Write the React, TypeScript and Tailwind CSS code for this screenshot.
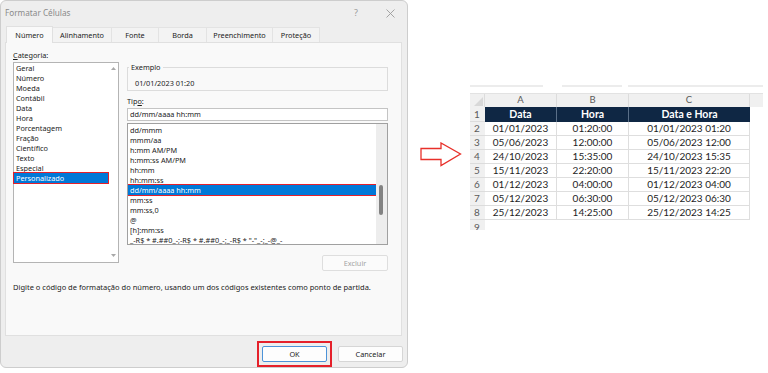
import React from "react";

const categories = [
  "Geral",
  "Número",
  "Moeda",
  "Contábil",
  "Data",
  "Hora",
  "Porcentagem",
  "Fração",
  "Científico",
  "Texto",
  "Especial",
  "Personalizado",
];

const types = [
  "dd/mmm",
  "mmm/aa",
  "h:mm AM/PM",
  "h:mm:ss AM/PM",
  "hh:mm",
  "hh:mm:ss",
  "dd/mm/aaaa hh:mm",
  "mm:ss",
  "mm:ss,0",
  "@",
  "[h]:mm:ss",
  '_-R$ * #.##0_-;-R$ * #.##0_-;_-R$ * "-"_-;_-@_-',
];

const tabs = [
  { label: "Número", w: "w-[47px]" },
  { label: "Alinhamento", w: "w-[59px]" },
  { label: "Fonte", w: "w-[47px]" },
  { label: "Borda", w: "w-[48px]" },
  { label: "Preenchimento", w: "w-[66px]" },
  { label: "Proteção", w: "w-[47px]" },
];

const rows = [
  ["01/01/2023", "01:20:00", "01/01/2023 01:20"],
  ["05/06/2023", "12:00:00", "05/06/2023 12:00"],
  ["24/10/2023", "15:35:00", "24/10/2023 15:35"],
  ["15/11/2023", "22:20:00", "15/11/2023 22:20"],
  ["01/12/2023", "04:00:00", "01/12/2023 04:00"],
  ["05/12/2023", "06:30:00", "05/12/2023 06:30"],
  ["25/12/2023", "14:25:00", "25/12/2023 14:25"],
];

function Dialog() {
  return (
    <div className="w-[408px] h-[368px] shrink-0 bg-[#eeeeee] border border-[#cdcdcd] rounded-[6px] flex flex-col text-[#1b1b1b] text-[7.3px] font-['Noto_Sans',sans-serif]">
      {/* title bar */}
      <div className="h-[24px] flex items-center pl-[4px] pr-[8px]">
        <span className="text-[8.2px] text-[#8a8a8a]">Formatar Células</span>
        <span className="ml-auto text-[9px] text-[#9a9a9a] mr-[28px]">?</span>
        <svg width="9" height="9" viewBox="0 0 9 9" className="mr-[4px]">
          <path d="M0.5 0.5 L8.5 8.5 M8.5 0.5 L0.5 8.5" stroke="#9a9a9a" strokeWidth="0.9" />
        </svg>
      </div>
      {/* tabs */}
      <div className="flex items-end h-[17px] pl-[5px]">
        {tabs.map((t, i) =>
          i === 0 ? (
            <div
              key={t.label}
              className={`${t.w} h-[17px] bg-[#f9f9f9] border border-b-0 border-[#e0e0e0] flex items-center justify-center relative z-10 -mb-[1px]`}
            >
              {t.label}
            </div>
          ) : (
            <div
              key={t.label}
              className={`${t.w} h-[15px] bg-[#f3f3f3] border border-b-0 border-l-0 border-[#e3e3e3] flex items-center justify-center`}
            >
              {t.label}
            </div>
          )
        )}
      </div>
      {/* panel */}
      <div className="ml-[4px] w-[397px] h-[294px] bg-[#f9f9f9] border border-[#e0e0e0] pl-[7px] pt-[6px] flex flex-col">
        <div className="flex">
          {/* left column */}
          <div className="w-[106px] flex flex-col">
            <div className="h-[13px] leading-[13px]">
              <span className="underline">C</span>ategoria:
            </div>
            <div className="h-[201px] bg-white border border-[#b4b4b4] flex">
              <div className="flex-1 flex flex-col">
                {categories.map((c, i) =>
                  i === categories.length - 1 ? (
                    <div
                      key={c}
                      className="h-[10px] leading-[10px] pl-[2px] bg-[#0078d7] text-white outline-[1.5px] outline-solid outline-[#e5202a]"
                    >
                      {c}
                    </div>
                  ) : (
                    <div key={c} className="h-[10px] leading-[10px] pl-[2px]">
                      {c}
                    </div>
                  )
                )}
              </div>
              <div className="w-[10px] flex flex-col items-center justify-between pt-[4px] pb-[5px]">
                <svg width="5" height="3" viewBox="0 0 5 3">
                  <path d="M0 3 L2.5 0 L5 3 Z" fill="#a8a8a8" />
                </svg>
                <svg width="5" height="3" viewBox="0 0 5 3">
                  <path d="M0 0 L2.5 3 L5 0 Z" fill="#a8a8a8" />
                </svg>
              </div>
            </div>
          </div>
          {/* right column */}
          <div className="ml-[8px] w-[261px] flex flex-col pt-[12px]">
            <fieldset className="border border-[#dcdcdc] h-[30px]">
              <legend className="ml-[1px] px-[2px] h-[12px] leading-[12px]">Exemplo</legend>
              <div className="mt-[4px] pl-[7px] h-[12px] leading-[12px]">01/01/2023 01:20</div>
            </fieldset>
            <div className="mt-[5px] h-[11px] leading-[11px]">
              Tip<span className="underline">o</span>:
            </div>
            <div className="mt-[1px] h-[13px] bg-white border border-[#c4c4c4] pl-[2px] leading-[11px]">
              dd/mm/aaaa hh:mm
            </div>
            <div className="mt-[2px] h-[122px] bg-white border border-[#a0a0a0] flex overflow-hidden">
              <div className="flex-1 flex flex-col pt-[1px] overflow-hidden">
                {types.map((t, i) =>
                  i === 6 ? (
                    <div
                      key={t}
                      className="h-[10px] shrink-0 leading-[10px] pl-[2px] bg-[#0078d7] text-white outline outline-[#e5202a] whitespace-pre"
                    >
                      {t}
                    </div>
                  ) : (
                    <div key={t} className="h-[10px] shrink-0 leading-[10px] pl-[2px] whitespace-pre">
                      {t}
                    </div>
                  )
                )}
              </div>
              <div className="w-[11px] bg-[#ededed] pt-[61px] pl-[3px]">
                <div className="w-[4px] h-[30px] rounded-full bg-[#828282]" />
              </div>
            </div>
            <div className="mt-[10px] self-end w-[66px] h-[16px] border border-[#dedede] bg-[#fbfbfb] rounded-[2px] flex items-center justify-center text-[#a3a3a3]">
              Excluir
            </div>
          </div>
        </div>
        <div className="mt-[10px] h-[12px] leading-[12px] text-[7.5px] whitespace-nowrap">
          Digite o código de formatação do número, usando um dos códigos existentes como ponto de partida.
        </div>
      </div>
      {/* buttons */}
      <div className="mt-[5px] flex justify-end items-center pr-[4px]">
        <div className="border-2 border-[#e5202a] p-[3px]">
          <div className="w-[65px] h-[16px] bg-[#fdfdfd] border border-[#4c93d8] rounded-[2px] flex items-center justify-center">
            OK
          </div>
        </div>
        <div className="ml-[6px] w-[65px] h-[16px] bg-[#fdfdfd] border border-[#d6d6d6] rounded-[2px] flex items-center justify-center">
          Cancelar
        </div>
      </div>
    </div>
  );
}

function Arrow() {
  return (
    <svg width="42" height="25" viewBox="0 0 42 25" className="block">
      <path
        d="M1 6.5 L21 6.5 L21 1 L40.5 12 L21 23.5 L21 17.5 L1 17.5 Z"
        fill="white"
        stroke="#e8302a"
        strokeWidth="1.3"
        strokeLinejoin="miter"
      />
    </svg>
  );
}

function Sheet() {
  return (
    <div className="flex flex-col font-['Lato',sans-serif] text-[10px]">
      {/* toolbar remnants */}
      <div className="flex h-[8px] items-start">
        <div className="w-[73px] h-[2px] bg-[#ececec]" />
        <div className="w-[60px] h-[2px] bg-[#ececec] ml-[19px]" />
        <div className="w-[135px] h-[2px] bg-[#ececec] ml-[6px]" />
      </div>
      {/* column headers */}
      <div className="flex h-[14px] bg-[#f0f0f0] border-t border-[#e2e2e2] text-[#5a5a5a] text-[9.5px]">
        <div className="w-[15px] border-r border-[#dcdcdc] flex items-end justify-end pr-[1px] pb-[1px]">
          <svg width="9" height="9" viewBox="0 0 9 9">
            <path d="M9 0 L9 9 L0 9 Z" fill="#d8d8d8" />
          </svg>
        </div>
        <div className="w-[72px] border-r border-[#dcdcdc] flex items-center justify-center">A</div>
        <div className="w-[72px] border-r border-[#dcdcdc] flex items-center justify-center">B</div>
        <div className="w-[121px] border-r border-[#dcdcdc] flex items-center justify-center">C</div>
        <div className="w-[13px]" />
      </div>
      {/* row 1 */}
      <div className="flex h-[15px]">
        <div className="w-[15px] bg-[#f0f0f0] border-b border-[#dcdcdc] text-[#5a5a5a] flex items-center pl-[4px]">1</div>
        <div className="w-[72px] bg-[#0f2744] text-white font-bold flex items-center justify-center border-r border-[#5a6f88] text-[10.5px]">Data</div>
        <div className="w-[72px] bg-[#0f2744] text-white font-bold flex items-center justify-center border-r border-[#5a6f88] text-[10.5px]">Hora</div>
        <div className="w-[121px] bg-[#0f2744] text-white font-bold flex items-center justify-center text-[10.5px]">Data e Hora</div>
      </div>
      {rows.map((r, i) => (
        <div key={i} className="flex h-[14px]">
          <div className="w-[15px] bg-[#f0f0f0] border-b border-[#dcdcdc] text-[#5a5a5a] flex items-center pl-[4px]">
            {i + 2}
          </div>
          <div className="w-[72px] border-r border-b border-[#dedede] text-[#1e1e1e] flex items-center justify-center">{r[0]}</div>
          <div className="w-[72px] border-r border-b border-[#dedede] text-[#1e1e1e] flex items-center justify-center">{r[1]}</div>
          <div className="w-[121px] border-r border-b border-[#dedede] text-[#1e1e1e] flex items-center justify-center">{r[2]}</div>
        </div>
      ))}
      <div className="flex h-[10px] overflow-hidden">
        <div className="w-[15px] bg-[#f0f0f0] text-[#5a5a5a] pl-[4px] leading-[14px]">9</div>
      </div>
    </div>
  );
}

export default function App() {
  return (
    <div className="w-[768px] h-[373px] bg-white flex items-start overflow-hidden">
      <Dialog />
      <div className="ml-[12px] mt-[142px]">
        <Arrow />
      </div>
      <div className="ml-[8px] mt-[85px]">
        <Sheet />
      </div>
    </div>
  );
}
